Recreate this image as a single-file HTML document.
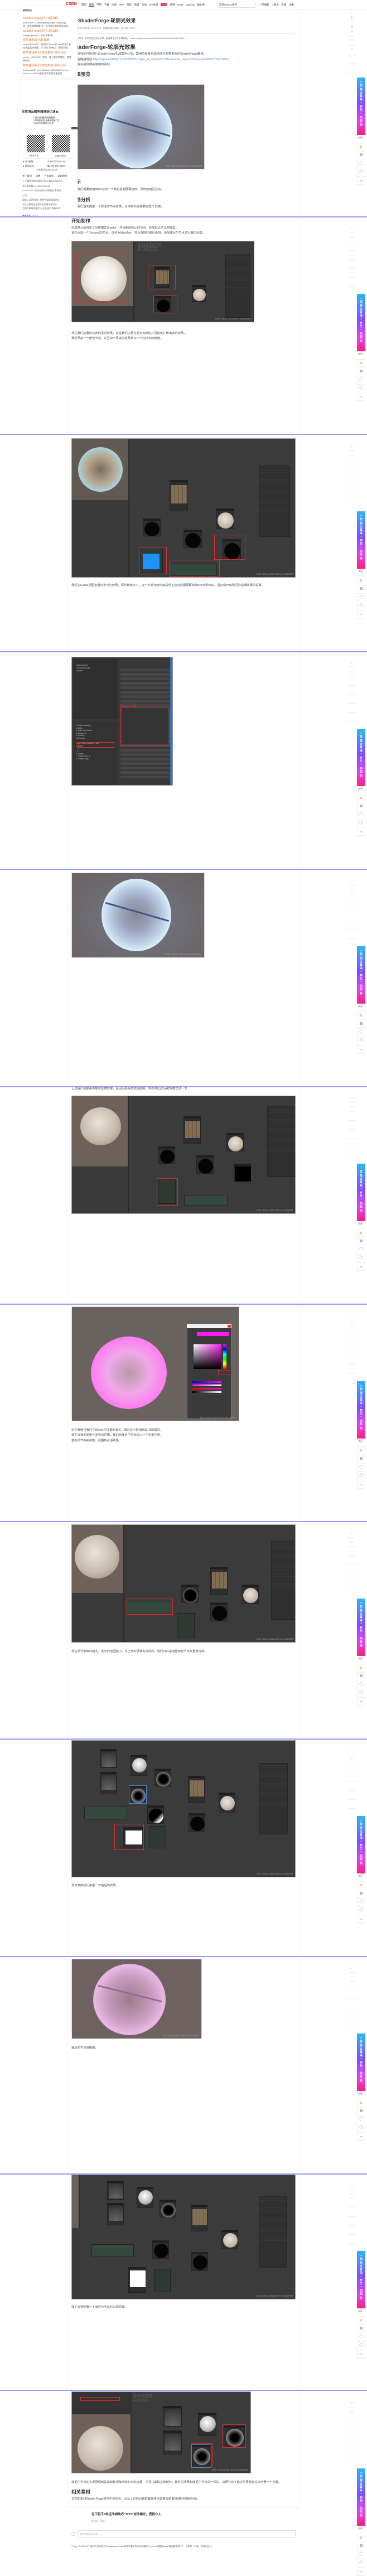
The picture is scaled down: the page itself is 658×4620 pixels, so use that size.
<!DOCTYPE html>
<html><head><meta charset="utf-8">
<style>
*{margin:0;padding:0;box-sizing:border-box}
body{width:658px;height:4576px;position:relative;background:#fff;font-family:"Liberation Sans","Noto Sans CJK SC",sans-serif;color:#4d4d4d;overflow:hidden}
.a{position:absolute}
.t{position:absolute;font-size:5.3px;line-height:7px;white-space:nowrap;color:#4d4d4d}
.h{position:absolute;font-size:8.5px;font-weight:bold;color:#333;white-space:nowrap}
.sep{position:absolute;left:0;width:658px;height:1.5px;background:#9a9af2}
.card{position:absolute;left:120px;width:418px;border-left:1px solid #f2f2f2;border-right:1px solid #f2f2f2;background:#fff}
.tb{position:absolute;left:624px;width:14px;height:15px;background:#fff;border-bottom:1px solid #f0f0f0;font-size:4px;color:#999;text-align:center;line-height:15px}
.ad{position:absolute;left:640px;width:15px;height:103px;background:linear-gradient(#29b6f6,#7c4dff 45%,#e040fb 75%,#ff1f7a);color:#fff;font-size:5px;line-height:6.3px;text-align:center;padding-top:6px;font-weight:bold}
.ad2{position:absolute;left:640px;width:15px;height:75px;background:#fff;border:1px solid #eee}
.ad2 i{display:block;height:15px;border-bottom:1px solid #f0f0f0;font-style:normal;font-size:6px;text-align:center;line-height:15px;color:#555}
.glow{position:absolute;background:radial-gradient(ellipse at 50% 55%,#77798a 0,#6d6b72 55%,#6a625f 100%);overflow:hidden;border:1px solid #ddd}
.sph{position:absolute;border-radius:50%}
.cy{background:radial-gradient(ellipse,#8a8898 0,#9aa2ba 30%,#bccde6 55%,#e0f8ff 74%,#7ff4f2 85%,rgba(80,160,255,.55) 92%,rgba(90,110,170,0) 100%)}
.ne{position:absolute;background:#3b3b3b;overflow:hidden;border:1px solid #999}
.pv{position:absolute;left:0;top:0;bottom:0;background:#6c6259;border-right:2px solid #2b2b2b}
.pvl{position:absolute;left:0;bottom:0;right:0;background:#3a3a3a}
.nd{position:absolute;background:#2e2e2e;border:1px solid #222}
.nd b{position:absolute;left:0;right:0;top:0;height:3px;background:#1e1e1e}
.tex{position:absolute;background:repeating-linear-gradient(90deg,#b8a894 0 6px,#8f8373 6px 7px),#b5a693;background-blend-mode:multiply}
.blk{position:absolute;border-radius:50%;background:radial-gradient(#050505 60%,#111 100%)}
.rb{position:absolute;border:1px solid #e02a2a}
.mp{position:absolute;background:#2f2f2f;border:1px solid #262626}
.mp i{display:block;height:4px;border-bottom:1px solid #383838}
.wm{position:absolute;right:4px;bottom:2px;font-family:"Liberation Serif",serif;font-size:5px;color:#bbb;opacity:.7}
.stone{background:radial-gradient(circle at 45% 40%,#e9e3da 0,#c7bcad 55%,#8e8274 100%)}
.side{position:absolute;left:35px;width:104px;background:#fff;box-shadow:0 0 2px #e6e6e6}
.o{color:#e07b39}
</style></head><body>

<div class="card" style="top:18px;height:370px"></div>

<div class="a" style="left:0;top:0;width:658px;height:18px;background:#fff;border-bottom:1px solid #eee"></div>
<div class="a" style="left:118px;top:4px;font-size:7px;font-weight:bold;color:#c9181e">CSDN</div>
<div class="t" style="top:5px;left:146px;font-size:4.6px;color:#333;word-spacing:3px">首页 <span style="color:#333;border-bottom:1px solid #c33">博客</span> 学院 下载 论坛 APP 问答 商城 活动 VIP会员 <span style="background:#c9181e;color:#fff;padding:0 1px">1024</span> 招聘 ITeye GitChat 图文课</div>
<div class="a" style="left:390px;top:3px;width:68px;height:11px;border:1px solid #ddd;border-radius:1px"></div>
<div class="t" style="left:393px;top:5px;font-size:4.5px;color:#555">阿旺Python精神</div>
<div class="t" style="left:465px;top:5px;font-size:4.6px;color:#333;word-spacing:3px"><span style="color:#c33">✎</span>写博客 <span style="color:#3a8ee6">✉</span>消息 登录 注册</div>

<div class="h" style="left:140px;top:30px;font-size:9px">ShaderForge-轮廓光效果</div>
<div class="t" style="left:128px;top:47px;font-size:4.6px;color:#999">2019年12月22日 22:10:29 &nbsp; <span style="color:#4c6fa8">阿旺四的日辉</span> &nbsp; 阅读数 5139</div>
<div class="a" style="left:128px;top:59px;width:402px;height:1.5px;background:#f0f0f0"></div>
<div class="t" style="left:128px;top:66px;font-size:3.8px;color:#666"><span style="color:#6a6">▬</span> 版权声明：本文为博主原创文章，未经博主允许不得转载。 &nbsp;https://blog.csdn.net/wwlcsdn000/article/details/78077320</div>
<div class="h" style="left:128px;top:76px;font-size:10px">ShaderForge-轮廓光效果</div>
<div class="t" style="left:128px;top:94px">接下来我们开始进行ShaderForge实战案例分析，案例的参考来源自阡生前梦老师的ShaderForge教程。</div>
<div class="t" style="left:128px;top:104px">原教程链接地址:<span style="color:#4c7fc0">https://space.bilibili.com/20508311?spm_id_from=333.338.viewbox_report.7#/channel/detail?cid=15815</span>。</div>
<div class="t" style="left:128px;top:113px">后面我会提供相关使用的素材。</div>
<div class="h" style="left:128px;top:127px">效果预览</div>

<div class="glow" style="left:138px;top:151px;width:229px;height:153px">
 <div class="sph cy" style="left:44px;top:18px;width:126px;height:132px"></div>
 <div class="a" style="left:50px;top:74px;width:118px;height:3px;background:#3d5c84;transform:rotate(16deg)"></div>
 <span class="wm">http://blog.csdn.net/wwlcsdn000</span>
</div>
<div class="h" style="left:128px;top:320px">提示</div>
<div class="t" style="left:128px;top:337px">这里我们需要使用到Unity的一个新的后期屏幕特效，具体使用见<span style="color:#4c7fc0">连接</span>。</div>
<div class="h" style="left:128px;top:352px">思路分析</div>
<div class="t" style="left:128px;top:368px">首先我们首先需要一个菲涅尔节点效果，从内到外的效果的发光 效果。</div>

<div class="side" style="top:10px;height:128px">
 <div class="t" style="left:6px;top:5px;font-size:4px;font-weight:bold;color:#333">最新评论</div>
 <div class="t o" style="left:6px;top:20px">ShaderForge插件介绍详解</div>
 <div class="t" style="left:6px;top:27px;font-size:4px;color:#555">wwlcsdn000：[reply]wanglong96158[/reply]</div>
 <div class="t" style="left:6px;top:33px;font-size:4px;color:#555">网上很多盗版博客 多一些些我之前的相关讲义...</div>
 <div class="t o" style="left:6px;top:43px">ShaderForge插件介绍详解</div>
 <div class="t" style="left:6px;top:50px;font-size:4px;color:#555">wanglong96158：你好下载吗？</div>
 <div class="t o" style="left:6px;top:59px">欧拉角和四元数理解</div>
 <div class="t" style="left:6px;top:66px;font-size:4px;color:#555">zera782429352：我用的CSDN4位?app发现了有</div>
 <div class="t" style="left:6px;top:72px;font-size:4px;color:#555">技术盘盘的博客，小小的门控有点（哪里出错）...</div>
 <div class="t o" style="left:6px;top:82px">数学基础系列-四元数的-实例分析</div>
 <div class="t" style="left:6px;top:89px;font-size:4px;color:#555">weixin_43811362：你的，看了感觉的哪些，就是</div>
 <div class="t" style="left:6px;top:95px;font-size:4px;color:#555">明白啦</div>
 <div class="t o" style="left:6px;top:105px">数学基础系列-四元数的-实例分析</div>
 <div class="t" style="left:6px;top:112px;font-size:4px;color:#555">wwlcsdn000：[reply]weixin_43811362[/reply] c</div>
 <div class="t" style="left:6px;top:118px;font-size:4px;color:#555">onst int N=1002 谢谢 您的声音是很亲切 ...</div>
</div>
<div class="side" style="top:143px;height:86px">
 <div class="t" style="left:4px;top:55px;font-size:5.5px;font-weight:bold;color:#222">买香港云服务器就选亿速云</div>
 <div class="t" style="left:24px;top:66px;font-size:3.6px;line-height:5px;color:#333">①直云香港服务器免备案 1<br>②可轻松实现 免备案极速打开<br>③CN2专线带宽 20元起</div>
</div>
<div class="a" style="left:128px;top:228px;width:11px;height:4px;background:#555"></div>
<div class="side" style="top:233px;height:152px">
 <div class="a" style="left:12px;top:8px;width:34px;height:33px;border:1px solid #eee;background:repeating-conic-gradient(#222 0 25%,#fff 0 50%) 0 0/4px 4px"></div>
 <div class="a" style="left:57px;top:8px;width:34px;height:33px;border:1px solid #eee;background:repeating-conic-gradient(#222 0 25%,#fff 0 50%) 0 0/4px 4px"></div>
 <div class="t" style="left:18px;top:43px;font-size:4.2px;color:#555">程序人生</div>
 <div class="t" style="left:63px;top:43px;font-size:4.2px;color:#555">CSDN资讯</div>
 <div class="a" style="left:5px;top:51px;width:94px;height:1px;background:#eee"></div>
 <div class="t" style="left:6px;top:53px;font-size:4.2px;line-height:7.5px;color:#555">♣ QQ客服<br>♣ 客服论坛</div>
 <div class="t" style="left:50px;top:53px;font-size:4.2px;line-height:7.5px;color:#555">✉ kefu@csdn.net<br>☎ 400-660-0108</div>
 <div class="t" style="left:30px;top:68px;font-size:4.2px;color:#555">工作时间 8:30-22:00</div>
 <div class="t" style="left:5px;top:79px;font-size:4.2px;color:#333;word-spacing:6px">关于我们 招聘 广告服务 网站地图</div>
 <div class="t" style="left:5px;top:88px;font-size:3.9px;line-height:8.5px;color:#666">☆ 百度提供站内搜索 京ICP备19004658号<br>京公网安备11010502030143<br>©1999-2019 北京创新乐知网络技术有限<br>公司</div>
 <div class="t" style="left:5px;top:122px;font-size:3.9px;line-height:7.5px;color:#666">网络110报警服务 &nbsp;经营性网站备案信息<br>北京互联网违法和不良信息举报中心<br>中国互联网举报中心 家长监护 版权申诉</div>
 <div class="t" style="left:5px;top:151px;font-size:3.9px;color:#333">商务合作 13412</div>
</div>

<div class="sep" style="top:388px"></div>
<div class="card" style="top:390px;height:388px"></div>
<div class="h" style="left:128px;top:390px">开始制作</div>
<div class="t" style="left:128px;top:406px">创建默认的自定义光照模式Shader，并且删除默认的节点，改变默认的光照模型。</div>
<div class="t" style="left:128px;top:415px">首先添加一个Texture2D节点，改名为MainTex，并且选择好图片素材。添加菲尼尔节点进行叠加处理。</div>
<div class="ne" style="left:128px;top:432px;width:328px;height:146px">
 <div class="pv" style="width:112px"><div class="pvl" style="height:28px"></div></div>
 <div class="sph stone" style="left:16px;top:26px;width:82px;height:82px;background:radial-gradient(circle at 45% 45%,#fff 0,#f3efe8 40%,#c9bdae 75%,#8b7f70 100%)"></div>
 <div class="rb" style="left:8px;top:20px;width:92px;height:88px"></div>
 <div class="t" style="left:118px;top:4px;font-size:10px;font-weight:bold;color:#555">SHADER<br>FORGE</div>
 <div class="nd" style="left:148px;top:45px;width:27px;height:38px"><b></b><div class="tex" style="left:2px;top:6px;width:23px;height:24px"></div></div>
 <div class="rb" style="left:136px;top:42px;width:50px;height:44px"></div>
 <div class="nd" style="left:148px;top:98px;width:30px;height:29px"><b></b><div class="blk" style="left:3px;top:5px;width:24px;height:23px"></div></div>
 <div class="rb" style="left:146px;top:97px;width:43px;height:32px"></div>
 <div class="nd" style="left:215px;top:78px;width:25px;height:30px"><b></b><div class="sph stone" style="left:1px;top:6px;width:23px;height:22px"></div></div>
 <div class="mp" style="left:275px;top:22px;width:45px;height:115px"><i></i><i></i><i></i><i></i><i></i><i></i><i></i><i></i><i></i><i></i><i></i><i></i><i></i><i></i><i></i><i></i><i></i><i></i></div>
 <span class="wm">http://blog.csdn.net/wwlcsdn000</span>
</div>
<div class="t" style="left:128px;top:595px">现在我们能看到初步的发光效果，但是我们还想让发光有颜色并且能够扩散出去的效果。。</div>
<div class="t" style="left:128px;top:604px">我们添加一个颜色节点，并且由于原来的结果乘以一个比较大的数值。</div>

<div class="sep" style="top:778px"></div>
<div class="card" style="top:780px;height:388px"></div>
<div class="ne" style="left:128px;top:786px;width:402px;height:250px">
 <div class="pv" style="width:103px;background:#625a52"><div class="pvl" style="height:138px"></div></div>
 <div class="sph" style="left:11px;top:15px;width:80px;height:80px;background:radial-gradient(circle,#7c6e60 0,#b7a890 45%,#a8d8ea 75%,#7ee8f8 90%,rgba(120,220,255,.3) 100%)"></div>
 <div class="nd" style="left:175px;top:74px;width:33px;height:56px"><b></b><div class="tex" style="left:2px;top:8px;width:29px;height:33px"></div></div>
 <div class="nd" style="left:127px;top:143px;width:32px;height:32px"><b></b><div class="blk" style="left:2px;top:5px;width:27px;height:26px"></div></div>
 <div class="nd" style="left:200px;top:163px;width:33px;height:33px"><b></b><div class="blk" style="left:2px;top:5px;width:28px;height:27px"></div></div>
 <div class="nd" style="left:258px;top:125px;width:33px;height:37px"><b></b><div class="sph stone" style="left:2px;top:6px;width:29px;height:29px"></div></div>
 <div class="nd" style="left:270px;top:180px;width:33px;height:38px"><b></b><div class="blk" style="left:2px;top:6px;width:29px;height:29px"></div></div>
 <div class="rb" style="left:255px;top:172px;width:56px;height:45px"></div>
 <div class="nd" style="left:123px;top:197px;width:40px;height:44px;background:#2d3c36"><div class="a" style="left:3px;top:8px;width:30px;height:28px;background:#1e90ff"></div></div>
 <div class="rb" style="left:120px;top:195px;width:50px;height:48px"></div>
 <div class="nd" style="left:175px;top:224px;width:85px;height:21px;background:#35483f"></div>
 <div class="rb" style="left:175px;top:217px;width:90px;height:30px"></div>
 <div class="mp" style="left:335px;top:48px;width:56px;height:128px"><i></i><i></i><i></i><i></i><i></i><i></i><i></i><i></i><i></i><i></i><i></i><i></i><i></i><i></i><i></i><i></i><i></i><i></i><i></i><i></i></div>
 <span class="wm">http://blog.csdn.net/wwlcsdn000</span>
</div>
<div class="t" style="left:128px;top:1047px">我们在Game视图查看外发光的效果，调节数值大小。这个外发光的轮廓是受上边的后期屏幕特效Boom影响的。请记得开启我们的后期效果的设置。</div>

<div class="sep" style="top:1168px"></div>
<div class="card" style="top:1170px;height:388px"></div>
<div class="ne" style="left:128px;top:1178px;width:182px;height:231px;background:#383838">
 <div class="a" style="left:2px;top:3px;width:80px;height:108px;background:#2f2f2f"></div>
 <div class="t" style="left:8px;top:12px;font-size:3.5px;line-height:5px;color:#bbb">Main Camera<br>Directional Light<br>Sphere</div>
 <div class="a" style="left:2px;top:115px;width:80px;height:114px;background:#333"></div>
 <div class="t" style="left:8px;top:120px;font-size:3.3px;line-height:4.6px;color:#bbb">▸ PostProcessing<br>▸ Editor<br>▸ Editor Resources<br>▸ Resources<br>▸ Runtime<br>▸ Textures<br><br>New PostProcessing Profile<br>▸ Scene<br>&nbsp; 1<br>&nbsp; 2<br>▸ Shader<br>&nbsp; ShaderForge_1<br>▸ ShaderForge</div>
 <div class="rb" style="left:11px;top:152px;width:65px;height:10px"></div>
 <div class="a" style="left:87px;top:20px;width:88px;height:200px;background:repeating-linear-gradient(#474747 0 5px,#383838 5px 8px)"></div>
 <div class="rb" style="left:87px;top:83px;width:28px;height:6px"></div>
 <div class="rb" style="left:87px;top:90px;width:88px;height:69px"></div>
 <div class="a" style="left:90px;top:92px;width:82px;height:64px;background:#333"></div>
 <div class="a" style="left:176px;top:0;width:4px;height:231px;background:#3d6fb5"></div>
</div>

<div class="sep" style="top:1558px"></div>
<div class="card" style="top:1560px;height:388px"></div>
<div class="glow" style="left:128px;top:1565px;width:239px;height:153px">
 <div class="sph cy" style="left:53px;top:10px;width:125px;height:130px"></div>
 <div class="a" style="left:58px;top:68px;width:118px;height:3px;background:#3d5c84;transform:rotate(16deg)"></div>
 <span class="wm">http://blog.csdn.net/wwlcsdn000</span>
</div>

<div class="sep" style="top:1948px"></div>
<div class="card" style="top:1950px;height:388px"></div>
<div class="t" style="left:128px;top:1950px">上边我们的颜色不能有轮廓效果，是因为颜色的范围限制，现在可以改为HDR模式试一下。</div>
<div class="ne" style="left:128px;top:1965px;width:402px;height:212px">
 <div class="pv" style="width:102px"><div class="pvl" style="height:84px"></div></div>
 <div class="sph stone" style="left:15px;top:20px;width:73px;height:68px"></div>
 <div class="nd" style="left:200px;top:36px;width:31px;height:50px"><b></b><div class="tex" style="left:2px;top:8px;width:27px;height:30px"></div></div>
 <div class="nd" style="left:155px;top:90px;width:30px;height:31px"><b></b><div class="blk" style="left:2px;top:5px;width:26px;height:25px"></div></div>
 <div class="nd" style="left:223px;top:106px;width:31px;height:33px"><b></b><div class="blk" style="left:2px;top:5px;width:27px;height:27px"></div></div>
 <div class="nd" style="left:277px;top:66px;width:31px;height:33px"><b></b><div class="sph stone" style="left:2px;top:5px;width:27px;height:27px"></div></div>
 <div class="nd" style="left:290px;top:121px;width:31px;height:32px"><b></b><div class="a" style="left:1px;top:4px;width:29px;height:27px;background:#000"></div></div>
 <div class="nd" style="left:154px;top:148px;width:32px;height:45px;background:#2f3833"></div>
 <div class="rb" style="left:152px;top:147px;width:38px;height:50px"></div>
 <div class="nd" style="left:201px;top:177px;width:78px;height:20px;background:#35483f"></div>
 <div class="mp" style="left:350px;top:17px;width:52px;height:128px"><i></i><i></i><i></i><i></i><i></i><i></i><i></i><i></i><i></i><i></i><i></i><i></i><i></i><i></i><i></i><i></i><i></i><i></i><i></i><i></i></div>
 <span class="wm">http://blog.csdn.net/wwlcsdn000</span>
</div>

<div class="sep" style="top:2338px"></div>
<div class="card" style="top:2340px;height:388px"></div>
<div class="glow" style="left:128px;top:2343px;width:301px;height:206px;background:#6a625f">
 <div class="sph" style="left:34px;top:53px;width:136px;height:130px;background:radial-gradient(ellipse,#b79aa8 0,#f0a8e8 40%,#ff7cf2 70%,#ff5ce5 88%,#f5b23c 93%,rgba(255,80,230,.3) 97%,rgba(0,0,0,0) 100%)"></div>
 <div class="a" style="left:206px;top:31px;width:80px;height:170px;background:#3a3a3a;border:1px solid #777"></div>
 <div class="a" style="left:206px;top:31px;width:80px;height:7px;background:#f2f2f2"></div>
 <div class="a" style="left:279px;top:32px;width:6px;height:5px;background:#d33"></div>
 <div class="a" style="left:224px;top:45px;width:58px;height:7px;background:#ff1cf0"></div>
 <div class="a" style="left:218px;top:67px;width:50px;height:44px;background:linear-gradient(to bottom,rgba(0,0,0,0),#000),linear-gradient(to right,#fff,#ff22f0)"></div>
 <div class="a" style="left:271px;top:67px;width:6px;height:44px;background:linear-gradient(#f0f,#00f,#0ff,#0f0,#ff0,#f00)"></div>
 <div class="rb" style="left:262px;top:113px;width:24px;height:8px"></div>
 <div class="a" style="left:216px;top:133px;width:52px;height:3px;background:linear-gradient(90deg,#00f,#f0f)"></div>
 <div class="a" style="left:216px;top:139px;width:52px;height:3px;background:linear-gradient(90deg,#f0f,#fff)"></div>
 <div class="a" style="left:216px;top:145px;width:52px;height:3px;background:linear-gradient(90deg,#f00,#f0f)"></div>
 <div class="a" style="left:216px;top:151px;width:52px;height:3px;background:linear-gradient(90deg,#000,#fff)"></div>
 <span class="wm">http://blog.csdn.net/wwlcsdn000</span>
</div>
<div class="t" style="left:128px;top:2562px">这个数值与我们在Bloom中设置的有关，超过这个数值就是HDR模式。</div>
<div class="t" style="left:128px;top:2571px">接下来我们调整外发光的范围，我们给菲尼尔节点输入一个变量控制。</div>
<div class="t" style="left:128px;top:2581px">重新调节相关参数，调整到合适效果。</div>

<div class="sep" style="top:2728px"></div>
<div class="card" style="top:2730px;height:388px"></div>
<div class="ne" style="left:128px;top:2734px;width:402px;height:212px">
 <div class="pv" style="width:94px"><div class="pvl" style="height:88px"></div></div>
 <div class="sph stone" style="left:5px;top:18px;width:80px;height:78px"></div>
 <div class="nd" style="left:248px;top:75px;width:31px;height:50px"><b></b><div class="tex" style="left:2px;top:8px;width:27px;height:30px"></div></div>
 <div class="nd" style="left:196px;top:107px;width:31px;height:33px"><b></b><div class="sph" style="left:2px;top:5px;width:27px;height:27px;background:radial-gradient(#000 50%,#fff 100%)"></div></div>
 <div class="nd" style="left:248px;top:139px;width:31px;height:34px"><b></b><div class="blk" style="left:2px;top:5px;width:27px;height:27px"></div></div>
 <div class="nd" style="left:304px;top:107px;width:31px;height:35px"><b></b><div class="sph stone" style="left:2px;top:5px;width:27px;height:27px"></div></div>
 <div class="nd" style="left:98px;top:136px;width:82px;height:24px;background:#35483f"></div>
 <div class="rb" style="left:98px;top:132px;width:83px;height:29px"></div>
 <div class="nd" style="left:188px;top:158px;width:32px;height:45px;background:#2f3833"></div>
 <div class="mp" style="left:357px;top:28px;width:45px;height:142px"><i></i><i></i><i></i><i></i><i></i><i></i><i></i><i></i><i></i><i></i><i></i><i></i><i></i><i></i><i></i><i></i><i></i><i></i><i></i><i></i><i></i><i></i></div>
 <span class="wm">http://blog.csdn.net/wwlcsdn000</span>
</div>
<div class="t" style="left:128px;top:2959px">现在调节参数的越大，发光的范围越小，与正常的思维有点反向，我们可以采用重映射节点来重新控制。</div>

<div class="sep" style="top:3118px"></div>
<div class="card" style="top:3120px;height:388px"></div>
<div class="ne" style="left:128px;top:3121px;width:402px;height:246px">
 <div class="nd" style="left:50px;top:15px;width:30px;height:34px"><b></b><div class="a" style="left:2px;top:5px;width:26px;height:26px;background:radial-gradient(circle at 50% 100%,#666,#333)"></div></div>
 <div class="nd" style="left:50px;top:56px;width:30px;height:40px"><b></b><div class="a" style="left:2px;top:5px;width:26px;height:26px;background:radial-gradient(circle at 50% 100%,#666,#333)"></div></div>
 <div class="nd" style="left:105px;top:25px;width:30px;height:38px"><b></b><div class="sph" style="left:2px;top:5px;width:26px;height:26px;background:radial-gradient(circle at 45% 40%,#fff,#bbb 60%,#333)"></div></div>
 <div class="nd" style="left:148px;top:50px;width:30px;height:32px"><b></b><div class="sph" style="left:2px;top:5px;width:26px;height:26px;background:radial-gradient(#000 40%,#fff 100%)"></div></div>
 <div class="nd" style="left:102px;top:80px;width:32px;height:33px;border-color:#3c8ae0"><b></b><div class="sph" style="left:3px;top:5px;width:26px;height:26px;background:radial-gradient(#000 30%,#fff 100%)"></div></div>
 <div class="nd" style="left:208px;top:63px;width:30px;height:48px"><b></b><div class="tex" style="left:2px;top:7px;width:26px;height:29px"></div></div>
 <div class="nd" style="left:263px;top:93px;width:30px;height:37px"><b></b><div class="sph stone" style="left:2px;top:5px;width:26px;height:26px"></div></div>
 <div class="nd" style="left:22px;top:118px;width:77px;height:23px;background:#35483f"></div>
 <div class="nd" style="left:135px;top:116px;width:30px;height:33px"><b></b><div class="sph" style="left:2px;top:5px;width:26px;height:26px;background:linear-gradient(135deg,#000 55%,#fff 80%)"></div></div>
 <div class="nd" style="left:209px;top:130px;width:30px;height:34px"><b></b><div class="blk" style="left:2px;top:5px;width:26px;height:26px"></div></div>
 <div class="nd" style="left:92px;top:155px;width:38px;height:38px"><b></b><div class="a" style="left:3px;top:5px;width:30px;height:25px;background:#fff"></div></div>
 <div class="rb" style="left:76px;top:149px;width:53px;height:47px"></div>
 <div class="nd" style="left:139px;top:153px;width:30px;height:40px;background:#2f3833"></div>
 <div class="mp" style="left:335px;top:40px;width:52px;height:128px"><i></i><i></i><i></i><i></i><i></i><i></i><i></i><i></i><i></i><i></i><i></i><i></i><i></i><i></i><i></i><i></i><i></i><i></i><i></i><i></i></div>
 <span class="wm">http://blog.csdn.net/wwlcsdn000</span>
</div>
<div class="t" style="left:128px;top:3379px">调节参数我们来看一下最后的效果。</div>

<div class="sep" style="top:3508px"></div>
<div class="card" style="top:3510px;height:388px"></div>
<div class="glow" style="left:128px;top:3513px;width:234px;height:144px;background:#6e6260">
 <div class="sph" style="left:38px;top:8px;width:130px;height:128px;background:radial-gradient(ellipse,#9c7c8c 0,#c79cc0 45%,#e9b8e4 68%,#ff6cef 82%,rgba(255,60,230,.45) 92%,rgba(0,0,0,0) 100%)"></div>
 <div class="a" style="left:45px;top:60px;width:118px;height:3px;background:#9a6a96;transform:rotate(14deg)"></div>
 <span class="wm">http://blog.csdn.net/wwlcsdn000</span>
</div>
<div class="t" style="left:128px;top:3670px">最后的节点连接图。</div>

<div class="sep" style="top:3898px"></div>
<div class="card" style="top:3900px;height:388px"></div>
<div class="ne" style="left:128px;top:3900px;width:402px;height:224px">
 <div class="a" style="left:0;top:0;width:14px;height:224px;background:#6c6259;border-right:2px solid #2b2b2b"></div>
 <div class="a" style="left:0;top:95px;width:14px;height:129px;background:#3a3a3a"></div>
 <div class="nd" style="left:63px;top:10px;width:30px;height:34px"><b></b><div class="a" style="left:2px;top:5px;width:26px;height:26px;background:radial-gradient(circle at 50% 100%,#666,#333)"></div></div>
 <div class="nd" style="left:63px;top:50px;width:30px;height:40px"><b></b><div class="a" style="left:2px;top:5px;width:26px;height:26px;background:radial-gradient(circle at 50% 100%,#666,#333)"></div></div>
 <div class="nd" style="left:116px;top:21px;width:30px;height:38px"><b></b><div class="sph" style="left:2px;top:5px;width:26px;height:26px;background:radial-gradient(circle at 45% 40%,#fff,#bbb 60%,#333)"></div></div>
 <div class="nd" style="left:157px;top:44px;width:30px;height:32px"><b></b><div class="sph" style="left:2px;top:5px;width:26px;height:26px;background:radial-gradient(#000 40%,#fff 100%)"></div></div>
 <div class="nd" style="left:213px;top:53px;width:30px;height:48px"><b></b><div class="tex" style="left:2px;top:7px;width:26px;height:29px"></div></div>
 <div class="nd" style="left:268px;top:98px;width:30px;height:35px"><b></b><div class="sph stone" style="left:2px;top:5px;width:26px;height:26px"></div></div>
 <div class="nd" style="left:35px;top:124px;width:76px;height:23px;background:#35483f"></div>
 <div class="nd" style="left:144px;top:117px;width:30px;height:33px"><b></b><div class="blk" style="left:2px;top:5px;width:26px;height:26px"></div></div>
 <div class="nd" style="left:214px;top:138px;width:30px;height:34px"><b></b><div class="blk" style="left:2px;top:5px;width:26px;height:26px"></div></div>
 <div class="nd" style="left:101px;top:165px;width:32px;height:46px"><b></b><div class="a" style="left:2px;top:5px;width:28px;height:30px;background:#fff"></div></div>
 <div class="nd" style="left:147px;top:168px;width:30px;height:42px;background:#2f3833"></div>
 <div class="mp" style="left:335px;top:37px;width:50px;height:130px"><i></i><i></i><i></i><i></i><i></i><i></i><i></i><i></i><i></i><i></i><i></i><i></i><i></i><i></i><i></i><i></i><i></i><i></i><i></i><i></i></div>
 <span class="wm">http://blog.csdn.net/wwlcsdn000</span>
</div>
<div class="t" style="left:128px;top:4135px">接下来我们看一下菲尼尔节点的实现原理。</div>

<div class="sep" style="top:4286px"></div>
<div class="card" style="top:4288px;height:210px;border-bottom:1px solid #f0f0f0"></div>
<div class="ne" style="left:128px;top:4289px;width:322px;height:147px">
 <div class="pv" style="width:107px;background:#6c6259"></div>
 <div class="a" style="left:0;top:0;width:107px;height:40px;background:#333"></div>
 <div class="rb" style="left:15px;top:9px;width:71px;height:7px"></div>
 <div class="sph stone" style="left:10px;top:61px;width:82px;height:80px"></div>
 <div class="t" style="left:110px;top:4px;font-size:8px;font-weight:bold;color:#555;line-height:8px">SHADER<br>FORGE</div>
 <div class="nd" style="left:163px;top:25px;width:34px;height:38px"><b></b><div class="a" style="left:2px;top:5px;width:30px;height:30px;background:radial-gradient(circle at 50% 100%,#666,#333)"></div></div>
 <div class="nd" style="left:163px;top:69px;width:34px;height:43px"><b></b><div class="a" style="left:2px;top:5px;width:30px;height:30px;background:radial-gradient(circle at 50% 100%,#666,#333)"></div></div>
 <div class="nd" style="left:226px;top:37px;width:33px;height:42px"><b></b><div class="sph" style="left:2px;top:5px;width:29px;height:29px;background:radial-gradient(circle at 45% 40%,#fff,#bbb 60%,#333)"></div></div>
 <div class="nd" style="left:272px;top:60px;width:38px;height:40px"><b></b><div class="sph" style="left:3px;top:5px;width:32px;height:32px;background:radial-gradient(#000 30%,#fff 100%)"></div></div>
 <div class="rb" style="left:270px;top:58px;width:42px;height:42px"></div>
 <div class="nd" style="left:214px;top:94px;width:36px;height:42px;border-color:#3c8ae0"><b></b><div class="sph" style="left:3px;top:6px;width:30px;height:30px;background:radial-gradient(#000 30%,#fff 100%)"></div></div>
 <div class="rb" style="left:213px;top:92px;width:39px;height:43px"></div>
 <span class="wm">http://blog.csdn.net/wwlcsdn000</span>
</div>
<div class="t" style="left:128px;top:4449px">菲尼尔节点的实现原理就是法线和视角法线的点积运算，并且只截取正数部分，最终的效果和菲尼尔节点是一样的。如果节点不能实时更新尝试点击看一个设置。</div>
<div class="h" style="left:128px;top:4463px">相关素材</div>
<div class="t" style="left:128px;top:4479px">本节的素材ShaderForge插件中就包含，以及上边的后期屏幕效果也需要提前备好(路径链接也有)。</div>
<div class="t" style="left:164px;top:4507px;font-size:5.5px;font-weight:bold;color:#222">定下股王8年还改细技巧"1272"战法曝光，震惊众人</div>
<div class="t" style="left:164px;top:4518px;font-size:4px;color:#999">辉阅家 · 顶部</div>
<div class="a" style="left:128px;top:4541px;width:7px;height:7px;border-radius:50%;border:1px solid #ccc"></div>
<div class="a" style="left:139px;top:4538px;width:391px;height:13px;border:1px solid #ddd;border-radius:1px"></div>
<div class="t" style="left:143px;top:4541px;font-size:4px;color:#aaa">想对作者说点什么</div>
<div class="t" style="left:128px;top:4563px;font-size:4px;color:#555">⊙ qq_42152145：请问为什么我在Processing Profile选项中看不到对应的菜单上scene视图和game视图都黑屏了？ &nbsp;(2年前 &nbsp;#1楼) &nbsp; <span style="color:#4c7fc0">查看回复(4)</span></div>

<div id="rt"></div>
<script>
var s=[0,388,778,1168,1558,1948,2338,2728,3118,3508,3898,4288],h='';
s.forEach(function(y,k){
 if(k==0){
  var lab=['2','5','','','','',''];
  for(var i=0;i<7;i++){h+='<div class="tb" style="top:'+(y+18+i*16)+'px;height:16px;line-height:7px;padding-top:2px;color:#888">'+['△','▢','▤','▯','▯','‹','›'][i]+'<br>'+lab[i]+'</div>';}
 } else {
  for(var i=0;i<7;i++){h+='<div class="tb" style="top:'+(y+14+i*16)+'px;height:16px;color:#aaa">'+(i<2?['2','5'][i]:'')+'</div>';}
 }
 if(y+139<4576) h+='<div class="ad" style="top:'+(y+139)+'px">一<br>款<br>能<br>让<br>耳<br>朵<br>“<br>怀<br>孕<br>”<br>的<br>耳<br>机</div><div class="t" style="left:642px;top:'+(y+243)+'px;font-size:4px;color:#777">关闭</div>';
 if(y+256<4576) h+='<div class="ad2" style="top:'+(y+256)+'px"><i style="color:#f4a000">♛</i><i>▦</i><i>◯</i><i>ⓘ</i><i>︿</i></div>';
});
document.getElementById('rt').innerHTML=h;
</script>
</body></html>
